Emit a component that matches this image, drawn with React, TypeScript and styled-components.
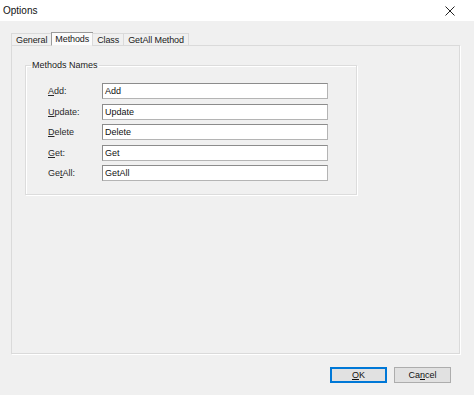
import React from "react";
import styled, { createGlobalStyle } from "styled-components";

const Global = createGlobalStyle`
  html, body { margin: 0; padding: 0; background: #f0f0f0; }
  body { font-family: "Liberation Sans", Arial, sans-serif; }
  * { box-sizing: border-box; }
`;

const Window = styled.div`
  width: 474px;
  height: 395px;
  background: #f0f0f0;
  display: flex;
  flex-direction: column;
  font-family: "Liberation Sans", Arial, sans-serif;
  font-size: 9px;
  color: #1a1a1a;
  overflow: hidden;
`;

const TitleBar = styled.div`
  height: 21px;
  background: #ffffff;
  display: flex;
  align-items: center;
  justify-content: space-between;
  padding: 0 19px 0 3px;
  flex: none;
`;

const Title = styled.span`
  font-size: 10px;
  color: #111;
`;

const Body = styled.div`
  flex: 1;
  display: flex;
  flex-direction: column;
  padding: 10px 14px 0 11px;
`;

const TabStrip = styled.div`
  display: flex;
  align-items: flex-end;
  height: 15px;
  padding-left: 1px;
  position: relative;
  z-index: 1;
  margin-bottom: -1px;
`;

const Tab = styled.div<{ $active?: boolean }>`
  height: ${(p) => (p.$active ? 14 : 13)}px;
  padding: 0 ${(p) => (p.$active ? 3 : 4)}px;
  display: flex;
  align-items: center;
  border: 1px solid ${(p) => (p.$active ? "#9a9a9a" : "#dadada")};
  border-bottom: ${(p) => (p.$active ? "1px solid #f0f0f0" : "1px solid #dadada")};
  background: ${(p) => (p.$active ? "#fbfbfb" : "#f0f0f0")};
  margin-left: -1px;
  white-space: nowrap;
  letter-spacing: -0.1px;
`;

const Panel = styled.div`
  width: 449px;
  height: 309px;
  border: 1px solid #dadada;
  box-shadow: 1px 1px 0 #ffffff;
  background: #f0f0f0;
  padding: 14px 0 0 13px;
`;

const Group = styled.fieldset`
  margin: 0;
  width: 332px;
  height: 135px;
  border: 1px solid #dcdcdc;
  box-shadow: inset 1px 1px 0 #ffffff, 1px 1px 0 #ffffff;
  padding: 13px 0 0 22px;
  min-inline-size: 0;
`;

const Legend = styled.legend`
  margin-left: -17px;
  padding: 0 1px;
  color: #1a1a1a;
`;

const Fields = styled.div`
  display: grid;
  grid-template-columns: 54px 226px;
  grid-auto-rows: 16px;
  row-gap: 4.5px;
  align-items: center;
`;

const Label = styled.label`
  color: #2a2a2a;
`;

const Key = styled.span`
  text-decoration: underline;
`;

const TextBox = styled.div`
  height: 16px;
  border: 1px solid #8c8c8c;
  border-right-color: #b4b4b4;
  border-bottom-color: #b4b4b4;
  background: #ffffff;
  display: flex;
  align-items: center;
  padding-left: 2px;
  color: #111;
`;

const Footer = styled.div`
  height: 41px;
  display: flex;
  justify-content: flex-end;
  align-items: flex-start;
  gap: 7px;
  padding: 13px 23px 0 0;
  flex: none;
`;

const Button = styled.div<{ $default?: boolean }>`
  width: 57px;
  height: 16px;
  border: 1px solid ${(p) => (p.$default ? "#0078d7" : "#adadad")};
  box-shadow: ${(p) => (p.$default ? "inset 0 0 0 1px #0078d7" : "none")};
  background: #e1e1e1;
  display: flex;
  align-items: center;
  justify-content: center;
  color: #111;
`;

const CloseIcon = () => (
  <svg width="10" height="10" viewBox="0 0 10 10">
    <path d="M0.5 0.5 L9.5 9.5 M9.5 0.5 L0.5 9.5" stroke="#222" strokeWidth="1" />
  </svg>
);

const fields: { pre: string; key: string; post: string; value: string }[] = [
  { pre: "", key: "A", post: "dd:", value: "Add" },
  { pre: "", key: "U", post: "pdate:", value: "Update" },
  { pre: "", key: "D", post: "elete", value: "Delete" },
  { pre: "", key: "G", post: "et:", value: "Get" },
  { pre: "Ge", key: "t", post: "All:", value: "GetAll" },
];

export default function App() {
  return (
    <>
      <Global />
      <Window>
        <TitleBar>
          <Title>Options</Title>
          <CloseIcon />
        </TitleBar>
        <Body>
          <TabStrip>
            <Tab>General</Tab>
            <Tab $active>Methods</Tab>
            <Tab>Class</Tab>
            <Tab>GetAll Method</Tab>
          </TabStrip>
          <Panel>
            <Group>
              <Legend>Methods Names</Legend>
              <Fields>
                {fields.map((f) => (
                  <React.Fragment key={f.value}>
                    <Label>
                      {f.pre}
                      <Key>{f.key}</Key>
                      {f.post}
                    </Label>
                    <TextBox>{f.value}</TextBox>
                  </React.Fragment>
                ))}
              </Fields>
            </Group>
          </Panel>
        </Body>
        <Footer>
          <Button $default>
            <span>
              <Key>O</Key>K
            </span>
          </Button>
          <Button>
            <span>
              Ca<Key>n</Key>cel
            </span>
          </Button>
        </Footer>
      </Window>
    </>
  );
}
